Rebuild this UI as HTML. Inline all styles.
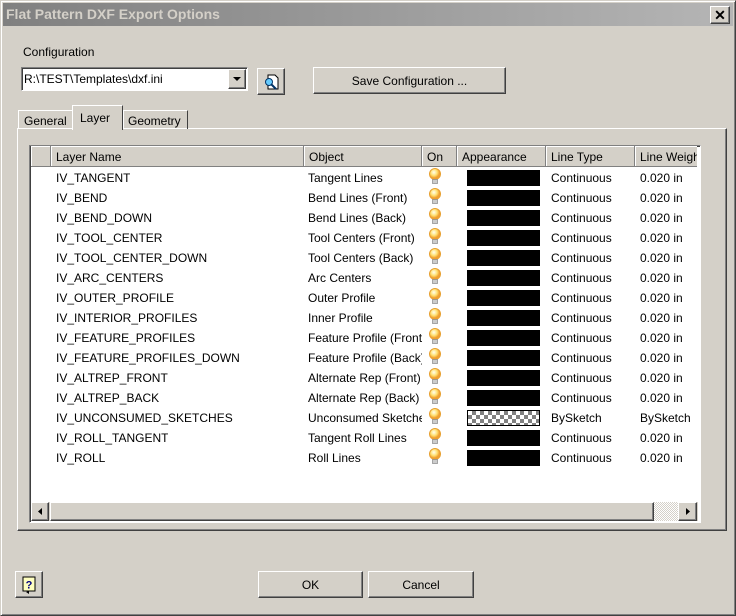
<!DOCTYPE html>
<html><head><meta charset="utf-8"><style>
*{box-sizing:border-box;margin:0;padding:0}
body{width:736px;height:616px;background:#d4d0c8;font:12px "Liberation Sans",sans-serif;color:#000;position:relative;overflow:hidden}
.a{position:absolute}
.out{border:1px solid;border-color:#fff #404040 #404040 #fff;box-shadow:inset -1px -1px #808080}
.in{border:1px solid;border-color:#808080 #fff #fff #808080;box-shadow:inset 1px 1px #404040}
.btn{background:#d4d0c8;display:flex;align-items:center;justify-content:center}
.hd{position:absolute;top:0;height:21px;line-height:22px;padding-left:5px;background:#d4d0c8;border-right:1px solid #808080;border-bottom:1px solid #808080;box-shadow:inset 1px 1px #fff;white-space:nowrap;overflow:hidden}
.r{position:absolute;left:0;height:20px;line-height:21px;width:665px;white-space:nowrap}
.r span{position:absolute;overflow:hidden}
.sw{position:absolute;left:436px;top:2px;width:73px;height:16px;background:#000}
.bulb{position:absolute;left:397px;top:0px}
</style></head><body>
<div class="a" style="left:0;top:0;width:736px;height:616px;border:1px solid;border-color:#d4d0c8 #404040 #404040 #d4d0c8;box-shadow:inset 1px 1px #fff,inset -1px -1px #808080"></div>
<div class="a" style="left:3px;top:3px;width:730px;height:23px;background:linear-gradient(90deg,#808080,#b5b5b5);color:#d4d0c8;font-weight:bold;font-size:14px;line-height:23px;padding-left:3px">Flat Pattern DXF Export Options</div>
<div class="a out btn" style="left:710px;top:6px;width:20px;height:18px;font-weight:bold;font-size:14px">✕</div>

<div class="a" style="left:23px;top:45px">Configuration</div>
<div class="a in" style="left:21px;top:67px;width:227px;height:24px;background:#fff;padding:4px 2px">R:\TEST\Templates\dxf.ini</div>
<div class="a out btn" style="left:228px;top:69px;width:18px;height:20px"><svg width="8" height="5"><path d="M0 0h8L4 4z" fill="#000"/></svg></div>
<div class="a out btn" style="left:257px;top:68px;width:28px;height:27px"><svg width="16" height="16"><path d="M5 1h7l3 3v11H5z" fill="#fff" stroke="#000"/><circle cx="6" cy="8" r="3.5" fill="#6cf" stroke="#036"/><path d="M8 10l5 5" stroke="#036" stroke-width="2"/></svg></div>
<div class="a out btn" style="left:313px;top:67px;width:193px;height:27px">Save Configuration ...</div>

<div class="a" style="left:17px;top:128px;width:710px;height:403px;border:1px solid;border-color:#fff #404040 #404040 #fff;box-shadow:inset -1px -1px #808080"></div>
<div class="a" style="left:18px;top:110px;width:55px;height:19px;border:1px solid;border-color:#fff #404040 transparent #fff;border-bottom:0;padding:3px 0 0 5px">General</div>
<div class="a" style="left:123px;top:110px;width:65px;height:19px;border:1px solid;border-color:#fff #404040 transparent #fff;border-bottom:0;padding:3px 0 0 4px">Geometry</div>
<div class="a" style="left:72px;top:105px;width:51px;height:25px;background:#d4d0c8;border:1px solid;border-color:#fff #404040 transparent #fff;border-bottom:0;padding:5px 0 0 7px">Layer</div>

<div class="a in" style="left:29px;top:145px;width:672px;height:378px;background:#fff"></div>
<div class="a" style="left:31px;top:146px;width:666px;height:356px;overflow:hidden">
<div class="hd" style="left:0;width:20px"></div>
<div class="hd" style="left:20px;width:253px">Layer Name</div>
<div class="hd" style="left:273px;width:118px">Object</div>
<div class="hd" style="left:391px;width:35px">On</div>
<div class="hd" style="left:426px;width:89px">Appearance</div>
<div class="hd" style="left:515px;width:89px">Line Type</div>
<div class="hd" style="left:604px;width:80px">Line Weight</div>
<div id="rows" class="a" style="left:0;top:22px;width:666px"></div>
</div>
<div class="a" style="left:31px;top:502px;width:667px;height:19px;background:#d4d0c8"></div>
<div class="a out btn" style="left:31px;top:502px;width:18px;height:19px"><svg width="4" height="7"><path d="M4 0v7L0 3.5z"/></svg></div>
<div class="a out" style="left:50px;top:502px;width:604px;height:19px;background:#d4d0c8"></div>
<div class="a" style="left:654px;top:502px;width:24px;height:19px;background:repeating-conic-gradient(#fff 0 25%,#d4d0c8 0 50%) 0 0/2px 2px"></div>
<div class="a out btn" style="left:678px;top:502px;width:19px;height:19px"><svg width="4" height="7"><path d="M0 0v7L4 3.5z"/></svg></div>

<div class="a out btn" style="left:15px;top:571px;width:28px;height:27px"><svg width="14" height="18"><rect x="1" y="1" width="12" height="14" fill="#ffffc0" stroke="#000"/><path d="M4 16l3 2v-3" fill="#000"/><text x="7" y="12.5" font-size="11" font-weight="bold" text-anchor="middle" fill="#000080" font-family="Liberation Sans">?</text></svg></div>
<div class="a out btn" style="left:258px;top:571px;width:105px;height:27px">OK</div>
<div class="a out btn" style="left:368px;top:571px;width:106px;height:27px">Cancel</div>

<script>
var d=[["IV_TANGENT","Tangent Lines"],["IV_BEND","Bend Lines (Front)"],["IV_BEND_DOWN","Bend Lines (Back)"],["IV_TOOL_CENTER","Tool Centers (Front)"],["IV_TOOL_CENTER_DOWN","Tool Centers (Back)"],["IV_ARC_CENTERS","Arc Centers"],["IV_OUTER_PROFILE","Outer Profile"],["IV_INTERIOR_PROFILES","Inner Profile"],["IV_FEATURE_PROFILES","Feature Profile (Front)"],["IV_FEATURE_PROFILES_DOWN","Feature Profile (Back)"],["IV_ALTREP_FRONT","Alternate Rep (Front)"],["IV_ALTREP_BACK","Alternate Rep (Back)"],["IV_UNCONSUMED_SKETCHES","Unconsumed Sketches"],["IV_ROLL_TANGENT","Tangent Roll Lines"],["IV_ROLL","Roll Lines"]];
var bulb='<svg class="bulb" width="14" height="18"><defs><radialGradient id="g" cx="40%" cy="35%"><stop offset="0" stop-color="#fffff0"/><stop offset="0.6" stop-color="#ffe070"/><stop offset="1" stop-color="#f0a030"/></radialGradient></defs><circle cx="7" cy="6" r="5.5" fill="url(#g)" stroke="#e8a030"/><rect x="4.5" y="11.5" width="5" height="4" fill="#ccc" stroke="#888" stroke-width=".7"/></svg>';
var h="";d.forEach(function(r,i){var bs=r[0]=="IV_UNCONSUMED_SKETCHES";
h+='<div class="r" style="top:'+(i*20)+'px"><span style="left:25px">'+r[0]+'</span><span style="left:277px;width:114px">'+r[1]+'</span>'+bulb+
(bs?'<div class="sw" style="background:repeating-conic-gradient(#808080 0 25%,#fff 0 50%) 0 0/8px 8px;border:1px solid #000"></div>':'<div class="sw"></div>')+
'<span style="left:520px">'+(bs?'BySketch':'Continuous')+'</span><span style="left:609px">'+(bs?'BySketch':'0.020 in')+'</span></div>';});
document.getElementById("rows").innerHTML=h;
</script>
</body></html>
